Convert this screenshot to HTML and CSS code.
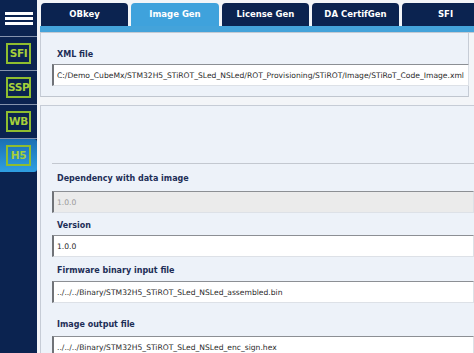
FILE: index.html
```html
<!DOCTYPE html>
<html>
<head>
    <title>Image Gen</title>
    <link rel="stylesheet" href="styles.css">
</head>
<body>
    <div class="app">
        <nav class="side">
            <div class="menu">
                <span class="bar"></span>
                <span class="bar"></span>
                <span class="bar"></span>
            </div>
            <div class="side-item"><span class="chip">SFI</span></div>
            <div class="side-item"><span class="chip">SSP</span></div>
            <div class="side-item"><span class="chip">WB</span></div>
            <div class="side-item active"><span class="chip">H5</span></div>
        </nav>

        <main class="main">
            <div class="tabs">
                <div class="tab">OBkey</div>
                <div class="tab current">Image Gen</div>
                <div class="tab">License Gen</div>
                <div class="tab">DA CertifGen</div>
                <div class="tab">SFI</div>
            </div>
            <div class="band"></div>

            <section class="panel panel-top">
                <div class="field">
                    <div class="label">XML file</div>
                    <input class="entry" type="text" readonly value="C:/Demo_CubeMx/STM32H5_STiROT_SLed_NSLed/ROT_Provisioning/STiROT/Image/STiRoT_Code_Image.xml">
                </div>
            </section>

            <section class="panel panel-body">
                <div class="spacer"></div>
                <div class="field dep">
                    <div class="label">Dependency with data image</div>
                    <input class="entry disabled" type="text" readonly value="1.0.0">
                </div>
                <div class="field version">
                    <div class="label">Version</div>
                    <input class="entry" type="text" readonly value="1.0.0">
                </div>
                <div class="field">
                    <div class="label">Firmware binary input file</div>
                    <input class="entry" type="text" readonly value="../../../Binary/STM32H5_STiROT_SLed_NSLed_assembled.bin">
                </div>
                <div class="field output">
                    <div class="label">Image output file</div>
                    <input class="entry" type="text" readonly value="../../../Binary/STM32H5_STiROT_SLed_NSLed_enc_sign.hex">
                </div>
            </section>
        </main>
    </div>
</body>
</html>
```

FILE: styles.css
```css
body {
    margin: 0;
    font-family: "DejaVu Sans", Verdana, sans-serif;
    background-color: #f3f5f8;
}
.app {
    display: flex;
    width: 474px;
    height: 353px;
    overflow: hidden;
}
.side {
    width: 37px;
    flex-shrink: 0;
    background-color: #0b2350;
    display: flex;
    flex-direction: column;
}
.menu {
    height: 36px;
    display: flex;
    flex-direction: column;
    justify-content: center;
    align-items: center;
    gap: 2px;
    border-bottom: 1px solid #8593ad;
}
.bar {
    display: block;
    width: 28px;
    height: 3px;
    background-color: #ffffff;
}
.side-item {
    height: 33px;
    display: flex;
    align-items: center;
    justify-content: center;
    border-bottom: 1px solid #8593ad;
}
.side-item.active {
    border-bottom: none;
    background: linear-gradient(to bottom, #1b6fb3, #2f9fe2);
    border-radius: 0 3px 3px 0;
}
.chip {
    width: 25px;
    height: 21px;
    box-sizing: border-box;
    border: 2px solid #8fbd2f;
    color: #a6d03a;
    font-weight: bold;
    font-size: 10.5px;
    line-height: 17px;
    text-align: center;
    letter-spacing: -0.3px;
}
.main {
    flex: 1;
    margin-left: 3px;
    display: flex;
    flex-direction: column;
    min-width: 0;
    overflow: hidden;
}
.tabs {
    display: flex;
    flex-shrink: 0;
    gap: 3px;
    padding: 3px 0 0 1px;
    background-color: #f3f5f8;
}
.tab {
    width: 87px;
    flex-shrink: 0;
    height: 23px;
    line-height: 23px;
    background-color: #0b2350;
    color: #ffffff;
    font-size: 8.5px;
    font-weight: bold;
    text-align: center;
    border-radius: 4px 4px 0 0;
}
.tab.current {
    width: 88px;
    background-color: #3fa2dc;
}
.band {
    flex-shrink: 0;
    height: 6px;
    background-color: #44a3da;
    border-bottom: 1px solid #c4cad3;
}
.panel {
    background-color: #edf2f9;
    border-left: 1px solid #c6ccd6;
}
.panel-top {
    flex-shrink: 0;
    height: 63px;
    margin-right: 5px;
    border-right: 1px solid #c6ccd6;
    border-bottom: 1px solid #c0c6cf;
    padding: 0 0 0 11px;
}
.panel-body {
    flex: 1;
    min-height: 0;
    overflow: hidden;
    margin-top: 8px;
    border-top: 1px solid #c6ccd6;
    padding-left: 11px;
}
.spacer {
    height: 57px;
    border-bottom: 1px solid #c3c8d0;
}
.field {
    display: flex;
    flex-direction: column;
}
.label {
    flex-shrink: 0;
    height: 24px;
    line-height: 28px;
    padding-left: 5px;
    font-size: 8px;
    font-weight: bold;
    color: #1d2e57;
}
.panel-top .label {
    height: 31px;
    line-height: 43px;
}
.dep .label {
    height: 27px;
    line-height: 29px;
}
.version .label {
    height: 22px;
    line-height: 25px;
}
.output .label {
    height: 33px;
    line-height: 44px;
}
.entry {
    flex-shrink: 0;
    height: 22px;
    box-sizing: border-box;
    margin: 0;
    padding: 0 0 0 3px;
    border: 1px solid #dde1e7;
    border-top-color: #8c8f94;
    border-left: 2px solid #707378;
    background-color: #ffffff;
    font-family: "DejaVu Sans", Verdana, sans-serif;
    font-size: 7.6px;
    color: #2a2a2a;
    outline: none;
    width: 100%;
}
.panel-top .entry {
    width: 417px;
}
.entry.disabled {
    background-color: #ebebeb;
    color: #9a9a9a;
}
```
